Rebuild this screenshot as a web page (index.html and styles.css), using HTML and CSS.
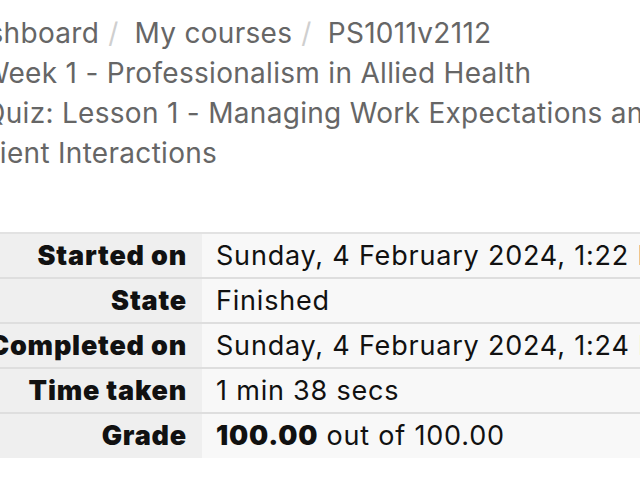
FILE: index.html
```html
<!DOCTYPE html>
<html lang="en">
<head>
<meta charset="utf-8">
<title>Quiz review</title>
<link rel="stylesheet" href="styles.css">
</head>
<body>
<div class="page">
  <nav class="crumbs">
    <div class="crumb-line first">
      <span class="crumb">Dashboard</span><span class="sep">/</span><span class="crumb">My courses</span><span class="sep">/</span><span class="crumb">PS1011v2112</span>
    </div>
    <div class="crumb-line second"><span class="crumb">Week 1 - Professionalism in Allied Health</span></div>
    <div class="crumb-line third"><span class="crumb">Quiz: Lesson 1 - Managing Work Expectations and</span></div>
    <div class="crumb-line fourth"><span class="crumb">Client Interactions</span></div>
  </nav>

  <div class="summary">
    <div class="row">
      <div class="label">Started on</div>
      <div class="value">Sunday, 4 February 2024, 1:22 PM</div>
    </div>
    <div class="row">
      <div class="label">State</div>
      <div class="value">Finished</div>
    </div>
    <div class="row">
      <div class="label">Completed on</div>
      <div class="value">Sunday, 4 February 2024, 1:24 PM</div>
    </div>
    <div class="row">
      <div class="label">Time taken</div>
      <div class="value">1 min 38 secs</div>
    </div>
    <div class="row">
      <div class="label">Grade</div>
      <div class="value"><b>100.00</b> out of 100.00</div>
    </div>
  </div>
</div>
</body>
</html>
```

FILE: styles.css
```css
html, body {
  margin: 0;
  padding: 0;
  background: #ffffff;
  overflow: hidden;
}

body {
  width: 640px;
  height: 479px;
  font-family: Inter, "Open Sans", sans-serif;
}

.page {
  padding-top: 13px;
}

.crumbs {
  font-size: 28px;
  line-height: 40px;
  color: #666666;
  white-space: nowrap;
  letter-spacing: 0.3px;
}

.crumb-line.first { margin-left: -48px; }
.crumb-line.second { margin-left: -18px; }
.crumb-line.third { margin-left: -16px; }
.crumb-line.fourth { margin-left: -28px; }

.sep {
  color: #cfcfcf;
  padding: 0 16px 0 9px;
}

.summary {
  margin-top: 59px;
  margin-left: -30px;
  width: 740px;
  border-top: 2px solid #e2e2e2;
}

.row {
  display: grid;
  grid-template-columns: 232px 1fr;
  border-bottom: 2px solid #dedede;
  height: 43px;
}

.row:last-child {
  border-bottom: none;
  height: 44px;
}

.label {
  background: #efefef;
  font-weight: 900;
  color: #111111;
  text-align: right;
  padding-right: 15px;
  font-size: 27px;
  letter-spacing: 0.8px;
  line-height: 43px;
  white-space: nowrap;
}

.value {
  background: #f8f8f8;
  color: #111111;
  padding-left: 14px;
  font-size: 27px;
  letter-spacing: 0.8px;
  line-height: 43px;
  white-space: nowrap;
}

.value b {
  font-weight: 900;
}
```
